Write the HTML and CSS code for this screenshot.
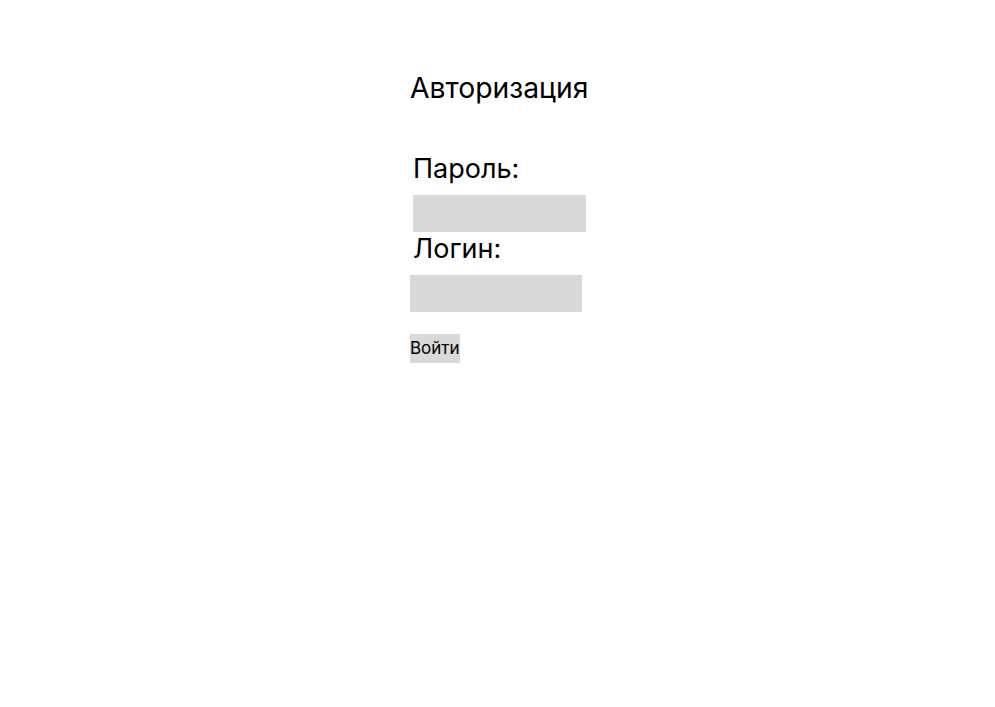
FILE: index.html
```html
<!DOCTYPE html>
<html lang="ru">
<head>
<meta charset="utf-8">
<link rel="stylesheet" href="styles.css">
</head>
<body>
<main class="page">
  <form class="auth">
    <h1 class="title">Авторизация</h1>
    <label class="label label-pass">Пароль:</label>
    <input class="field field-pass" type="password">
    <label class="label label-login">Логин:</label>
    <input class="field field-login" type="text">
    <button class="btn" type="button">Войти</button>
  </form>
</main>
</body>
</html>
```
FILE: styles.css
```css
html, body {
  margin: 0;
  padding: 0;
  background: #fff;
}
body {
  font-family: Inter, "Noto Sans", sans-serif;
  color: #000;
  width: 995px;
  height: 707px;
}
.page {
  display: flex;
  justify-content: flex-start;
  padding-left: 410px;
  padding-top: 71px;
}
.auth {
  display: flex;
  flex-direction: column;
  align-items: flex-start;
}
.title {
  margin: 0;
  font-size: 28.3px;
  font-weight: 400;
  line-height: 34px;
}
.label {
  font-size: 27px;
  line-height: 32px;
  margin-left: 3px;
}
.label-pass {
  margin-top: 48px;
}
.label-login {
  margin-top: 1px;
}
.field {
  border: none;
  outline: none;
  background: #d9d9d9;
  height: 37px;
  padding: 0;
  margin: 0;
}
.field-pass {
  width: 173px;
  margin-left: 3px;
  margin-top: 10px;
}
.field-login {
  width: 172px;
  margin-top: 10px;
}
.btn {
  margin-top: 22px;
  border: none;
  background: #d9d9d9;
  font-family: Inter, "Noto Sans", sans-serif;
  font-size: 17px;
  color: #000;
  padding: 0;
  height: 29px;
  width: auto;
  line-height: 29px;
  text-align: left;
}
```
